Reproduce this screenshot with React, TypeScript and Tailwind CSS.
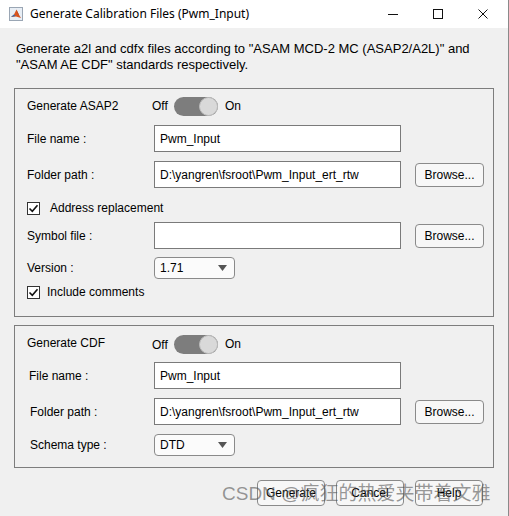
import React from "react";

const font = { fontFamily: '"Liberation Sans", Arial, sans-serif' };

function Toggle() {
  return (
    <div className="relative w-[44px] h-[19px] rounded-full bg-[#7d7d7d]">
      <div className="absolute right-0 top-0 w-[19px] h-[19px] rounded-full bg-[#d9d9d9] border border-[#bdbdbd]" />
    </div>
  );
}

function Check() {
  return (
    <div className="w-[13px] h-[13px] bg-white border border-[#333] flex items-center justify-center">
      <svg width="11" height="11" viewBox="0 0 11 11">
        <path d="M1.5 5.5 L4.3 8.3 L9.5 2.2" fill="none" stroke="#111" strokeWidth="1.6" />
      </svg>
    </div>
  );
}

function Input({ value }: { value: string }) {
  return (
    <div className="w-[247px] h-[27px] bg-white border border-[#7a7a7a] flex items-center pl-[5px] text-[12px] text-black whitespace-nowrap overflow-hidden">
      {value}
    </div>
  );
}

function Browse() {
  return (
    <div className="ml-[14px] w-[69px] h-[24px] rounded-[4px] border border-[#8a8a8a] bg-[#f7f7f7] flex items-center justify-center text-[12px]">
      Browse...
    </div>
  );
}

function Dropdown({ value }: { value: string }) {
  return (
    <div className="w-[81px] h-[22px] rounded-[4px] border border-[#8a8a8a] bg-[#fbfbfb] flex items-center justify-between pl-[5px] pr-[7px] text-[12px]">
      <span>{value}</span>
      <svg width="9" height="6" viewBox="0 0 9 6">
        <path d="M0 0 L9 0 L4.5 6 Z" fill="#555" />
      </svg>
    </div>
  );
}

function Row({
  label,
  children,
  mt,
  lx = "pl-[12px]",
}: {
  label: string;
  children: React.ReactNode;
  mt: string;
  lx?: string;
}) {
  return (
    <div className={`flex items-center ${mt}`}>
      <div className={`w-[139px] ${lx} text-[12px]`}>{label}</div>
      {children}
    </div>
  );
}

export default function App() {
  return (
    <div
      className="relative w-[509px] h-[516px] bg-[#f0f0f0] border-r border-[#8a8a8a] flex flex-col text-black overflow-hidden"
      style={font}
    >
      {/* title bar */}
      <div className="h-[28px] bg-white flex items-center shrink-0">
        <div className="ml-[9px] w-[14px] h-[14px] border border-[#9aa6b4] bg-[#e8eef5] flex items-center justify-center">
          <svg width="12" height="12" viewBox="0 0 12 12">
            <path d="M1 9 L4 6.5 L6.5 1.5 L9 7 L11 10 L6 8.5 Z" fill="#d9541e" />
            <path d="M1 9 L4 6.5 L5.5 8 Z" fill="#2a6fb8" />
            <path d="M6.5 1.5 L9 7 L11 10 L8 6 Z" fill="#a32a10" />
          </svg>
        </div>
        <div
          className="ml-[7px] text-[12px] text-black"
          style={{ fontFamily: '"Noto Sans", "Open Sans", sans-serif', fontSize: "12px" }}
        >
          Generate Calibration Files (Pwm_Input)
        </div>
        <div className="ml-auto flex items-center">
          <svg width="12" height="12" viewBox="0 0 12 12" className="mr-[33px]">
            <path d="M1 6.5 H11" stroke="#111" strokeWidth="1" />
          </svg>
          <svg width="12" height="12" viewBox="0 0 12 12" className="mr-[33px]">
            <rect x="1.5" y="1.5" width="9" height="9" fill="none" stroke="#111" strokeWidth="1" />
          </svg>
          <svg width="12" height="12" viewBox="0 0 12 12" className="mr-[19px]">
            <path d="M1.5 1.5 L10.5 10.5 M10.5 1.5 L1.5 10.5" stroke="#111" strokeWidth="1" />
          </svg>
        </div>
      </div>

      <div className="px-[14px] flex flex-col">
        <div className="mt-[13px] pl-[2px] text-[13px] leading-[16px]">
          Generate a2l and cdfx files according to "ASAM MCD-2 MC (ASAP2/A2L)" and
          <br />
          "ASAM AE CDF" standards respectively.
        </div>

        {/* Panel 1 */}
        <div className="mt-[15px] w-[480px] h-[229px] border border-[#7d7d7d] flex flex-col">
          <div className="flex items-center mt-[7px] h-[20px]">
            <div className="w-[137px] pl-[12px] text-[12px]">Generate ASAP2</div>
            <div className="text-[12px] w-[22px]">Off</div>
            <Toggle />
            <div className="text-[12px] ml-[7px]">On</div>
          </div>
          <Row label="File name :" mt="mt-[9px]">
            <Input value="Pwm_Input" />
          </Row>
          <Row label="Folder path :" mt="mt-[9px]">
            <Input value="D:\yangren\fsroot\Pwm_Input_ert_rtw" />
            <Browse />
          </Row>
          <div className="flex items-center mt-[13px] pl-[12px] h-[14px]">
            <Check />
            <span className="ml-[10px] text-[12px]">Address replacement</span>
          </div>
          <Row label="Symbol file :" mt="mt-[7px]">
            <Input value="" />
            <Browse />
          </Row>
          <Row label="Version :" mt="mt-[8px]">
            <Dropdown value="1.71" />
          </Row>
          <div className="flex items-center mt-[6px] pl-[12px] h-[14px]">
            <Check />
            <span className="ml-[7px] text-[12px]">Include comments</span>
          </div>
        </div>

        {/* Panel 2 */}
        <div className="mt-[8px] w-[480px] h-[143px] border border-[#7d7d7d] flex flex-col">
          <div className="flex items-center mt-[8px] h-[20px]">
            <div className="w-[137px] pl-[12px] text-[12px] -mt-[3px]">Generate CDF</div>
            <div className="text-[12px] w-[22px] mt-[2px]">Off</div>
            <Toggle />
            <div className="text-[12px] ml-[7px]">On</div>
          </div>
          <Row label="File name :" mt="mt-[8px]" lx="pl-[14px]">
            <Input value="Pwm_Input" />
          </Row>
          <Row label="Folder path :" mt="mt-[9px]" lx="pl-[15px]">
            <Input value="D:\yangren\fsroot\Pwm_Input_ert_rtw" />
            <Browse />
          </Row>
          <Row label="Schema type :" mt="mt-[9px]" lx="pl-[15px]">
            <Dropdown value="DTD" />
          </Row>
        </div>

        {/* buttons */}
        <div className="mt-[12px] flex justify-end gap-[11px] pr-[11px]">
          <div className="w-[68px] h-[26px] rounded-[4px] border border-[#8a8a8a] bg-[#f7f7f7] flex items-center justify-center text-[12px]">
            Generate
          </div>
          <div className="w-[68px] h-[26px] rounded-[4px] border border-[#8a8a8a] bg-[#f7f7f7] flex items-center justify-center text-[12px]">
            Cancel
          </div>
          <div className="w-[68px] h-[26px] rounded-[4px] border border-[#8a8a8a] bg-[#f7f7f7] flex items-center justify-center text-[12px]">
            Help
          </div>
        </div>
      </div>

      {/* watermark */}
      <div
        className="absolute left-[222px] top-[482px] text-[19px] leading-[24px] text-[#555555]/60 whitespace-nowrap"
        style={{ fontFamily: '"Liberation Sans", "Noto Sans CJK SC", sans-serif' }}
      >
        CSDN @疯狂的热爱夹带着文雅
      </div>
    </div>
  );
}
